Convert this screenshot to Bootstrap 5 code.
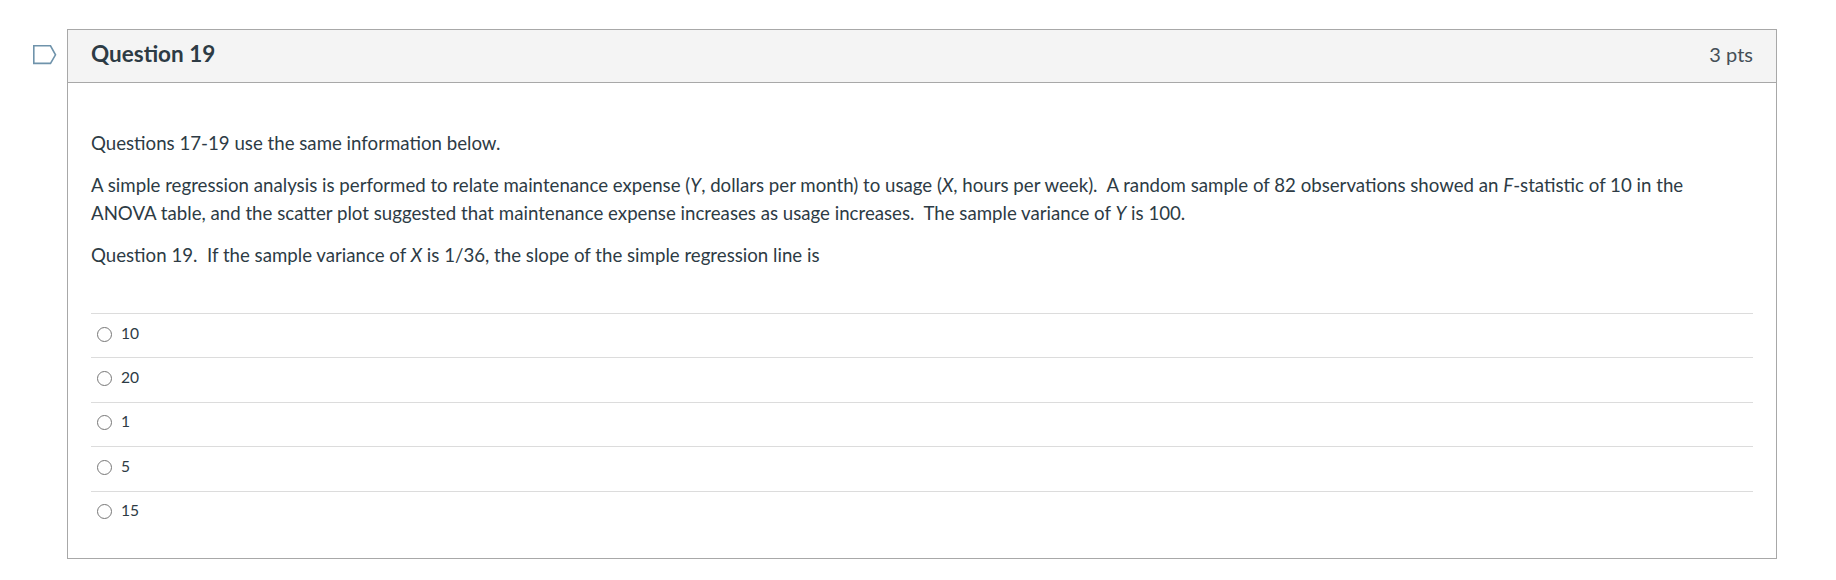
<!DOCTYPE html>
<html lang="en">
<head>
  <meta charset="UTF-8" />
  <meta name="viewport" content="width=device-width, initial-scale=1" />
  <title>Question 19</title>
  <link href="https://cdn.jsdelivr.net/npm/bootstrap@5.3.0/dist/css/bootstrap.min.css" rel="stylesheet" />
  <style>
    body { font-family: Lato, "Open Sans", sans-serif; color: #2d3b45; background: #fff; }
    .quiz-wrap { padding: 29px 59px 0 33px; }
    .flag-col { width: 34px; flex: none; padding-top: 16px; }
    .flag-col svg { display: block; }
    .quiz-card { border: 1px solid #a8a8a8; border-radius: 0; height: 530px; }
    .quiz-head { background: #f4f4f4; border-bottom: 1px solid #a8a8a8; border-radius: 0; height: 53px; padding: 0 23px 4px; }
    .quiz-title { font-size: 22.5px; font-weight: 700; }
    .quiz-pts { font-size: 20px; color: #454f57; }
    .quiz-body { padding: 0 23px; font-size: 18.67px; line-height: 28px; }
    .quiz-text { padding: 46px 0 44px; }
    .quiz-text p { margin: 0 0 14px; }
    .quiz-text p:last-child { margin: 0; }
    .answer-row { height: 44.4px; border-top: 1px solid #dcdcdc; padding: 0 0 6px 6px; gap: 9px; font-size: 15.6px; }
    .answer-dot { width: 15px; height: 15px; border: 1.5px solid #777; border-radius: 50%; flex: none; margin-top: 3px; }
  </style>
</head>
<body>
  <div class="quiz-wrap d-flex">
    <div class="flag-col">
      <svg width="24" height="20" viewBox="0 0 24 20"><path d="M0.8 0.8 H17.5 L22.5 9.8 L17.5 18.4 H0.8 Z" fill="#fff" stroke="#6f93ab" stroke-width="1.6"/></svg>
    </div>
    <div class="card quiz-card flex-grow-1">
      <div class="quiz-head d-flex justify-content-between align-items-center">
        <span class="quiz-title">Question 19</span>
        <span class="quiz-pts">3 pts</span>
      </div>
      <div class="quiz-body">
        <div class="quiz-text">
          <p>Questions 17-19 use the same information below.</p>
          <p>A simple regression analysis is performed to relate maintenance expense (<i>Y</i>, dollars per month) to usage (<i>X</i>, hours per week).&nbsp; A random sample of 82 observations showed an <i>F</i>-statistic of 10 in the<br>ANOVA table, and the scatter plot suggested that maintenance expense increases as usage increases.&nbsp; The sample variance of <i>Y</i> is 100.</p>
          <p>Question 19.&nbsp; If the sample variance of <i>X</i> is 1/36, the slope of the simple regression line is</p>
        </div>
        <div class="answer-row d-flex align-items-center"><span class="answer-dot"></span><span>10</span></div>
        <div class="answer-row d-flex align-items-center"><span class="answer-dot"></span><span>20</span></div>
        <div class="answer-row d-flex align-items-center"><span class="answer-dot"></span><span>1</span></div>
        <div class="answer-row d-flex align-items-center"><span class="answer-dot"></span><span>5</span></div>
        <div class="answer-row d-flex align-items-center"><span class="answer-dot"></span><span>15</span></div>
      </div>
    </div>
  </div>
  <script src="https://cdn.jsdelivr.net/npm/bootstrap@5.3.0/dist/js/bootstrap.bundle.min.js"></script>
</body>
</html>
